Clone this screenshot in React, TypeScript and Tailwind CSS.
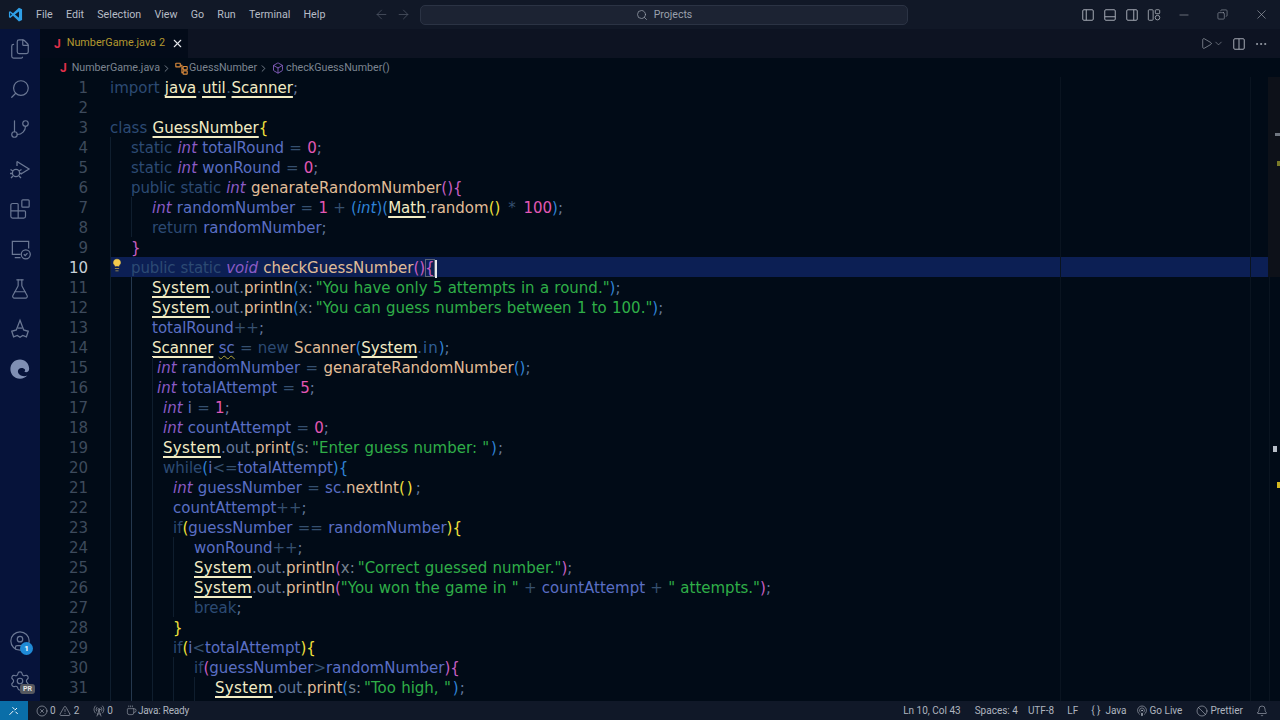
import {
  ArrowLeft,
  ArrowRight,
  Ban,
  Bell,
  Blocks,
  Box,
  ChevronDown,
  ChevronRight,
  CircleUser,
  CircleX,
  Coffee,
  Copy,
  Ellipsis,
  Files,
  FlaskConical,
  GitBranch,
  Lightbulb,
  Minus,
  Play,
  Podcast,
  RadioTower,
  Search,
  Settings,
  TriangleAlert,
  X,
} from "lucide-react";

const TOKEN = {
  k: "text-[#2c4a73]",
  kp: "text-[#2c4a73] tracking-[-0.12px]",
  t: "text-[#f2ecc4] underline decoration-[#f2ecc4] decoration-[length:1.5px] underline-offset-[3px]",
  ts: "text-[#f2ecc4] underline decoration-[#f2ecc4] decoration-[length:1.5px] underline-offset-[3px] tracking-[0.33px]",
  v: "text-[#5a6fc4]",
  d: "text-[#64789c]",
  in: "text-[#2f5f98] tracking-[1px]",
  i: "text-[#8b5bc6] italic",
  ib: "text-[#2f83d6] italic",
  n: "text-[#e257b4]",
  s: "text-[#2fae48]",
  m: "text-[#e0bd98]",
  o: "text-[#35506f]",
  dt: "text-[#35506f] mx-[0.5px]",
  op: "text-[#35506f] mx-[2.5px]",
  y: "text-[#f3e23c]",
  yw: "text-[#f3e23c] tracking-[2px] mr-[1px]",
  pk: "text-[#c95fc4]",
  pb: "text-[#c95fc4] outline outline-1 -outline-offset-1 outline-[#5c6678]",
  b: "text-[#2f83d6]",
  bl: "text-[#2f83d6] ml-[2px] mr-[1px]",
  h: "text-[#74808f] pr-[3px]",
  w: "text-[#5a6fc4] underline decoration-wavy decoration-1 decoration-[#b5a53a] underline-offset-[2px]",
};

type Tok = keyof typeof TOKEN;
type Line = { x: number; c: [Tok, string][] };

const LINES: Line[] = [
  { x: 0, c: [["k", "import "], ["t", "java"], ["dt", "."], ["t", "util"], ["dt", "."], ["t", "Scanner"], ["d", ";"]] },
  { x: 0, c: [] },
  { x: 0, c: [["k", "class "], ["t", "GuessNumber"], ["y", "{"]] },
  { x: 21, c: [["k", "static "], ["i", "int "], ["v", "totalRound "], ["o", "= "], ["n", "0"], ["d", ";"]] },
  { x: 21, c: [["k", "static "], ["i", "int "], ["v", "wonRound "], ["o", "= "], ["n", "0"], ["d", ";"]] },
  { x: 21, c: [["kp", "public static "], ["i", "int "], ["m", "genarateRandomNumber"], ["pk", "()"], ["pk", "{"]] },
  { x: 42, c: [["i", "int "], ["v", "randomNumber "], ["o", "= "], ["n", "1 "], ["o", "+ "], ["b", "("], ["ib", "int"], ["b", ")"], ["b", "("], ["t", "Math"], ["d", "."], ["m", "random"], ["y", "()"], ["op", " * "], ["n", "100"], ["b", ")"], ["d", ";"]] },
  { x: 42, c: [["k", "return "], ["v", "randomNumber"], ["d", ";"]] },
  { x: 21, c: [["pk", "}"]] },
  { x: 21, c: [["kp", "public static "], ["i", "void "], ["m", "checkGuessNumber"], ["pk", "()"], ["pb", "{"]] },
  { x: 42, c: [["ts", "System"], ["d", ".out."], ["m", "println"], ["b", "("], ["h", "x:"], ["s", "\"You have only 5 attempts in a round.\""], ["b", ")"], ["d", ";"]] },
  { x: 42, c: [["ts", "System"], ["d", ".out."], ["m", "println"], ["b", "("], ["h", "x:"], ["s", "\"You can guess numbers between 1 to 100.\""], ["b", ")"], ["d", ";"]] },
  { x: 42, c: [["v", "totalRound"], ["o", "++"], ["d", ";"]] },
  { x: 42, c: [["t", "Scanner"], ["o", " "], ["w", "sc"], ["o", " = "], ["k", "new "], ["m", "Scanner"], ["b", "("], ["t", "System"], ["in", ".in"], ["b", ")"], ["d", ";"]] },
  { x: 47, c: [["i", "int "], ["v", "randomNumber "], ["o", "= "], ["m", "genarateRandomNumber"], ["b", "()"], ["d", ";"]] },
  { x: 47, c: [["i", "int "], ["v", "totalAttempt "], ["o", "= "], ["n", "5"], ["d", ";"]] },
  { x: 53, c: [["i", "int "], ["v", "i "], ["o", "= "], ["n", "1"], ["d", ";"]] },
  { x: 53, c: [["i", "int "], ["v", "countAttempt "], ["o", "= "], ["n", "0"], ["d", ";"]] },
  { x: 53, c: [["ts", "System"], ["d", ".out."], ["m", "print"], ["b", "("], ["h", "s:"], ["s", "\"Enter guess number: \""], ["bl", ")"], ["d", ";"]] },
  { x: 53, c: [["k", "while"], ["b", "("], ["v", "i"], ["o", "<="], ["v", "totalAttempt"], ["b", ")"], ["b", "{"]] },
  { x: 63, c: [["i", "int "], ["v", "guessNumber "], ["o", "= "], ["v", "sc."], ["m", "nextInt"], ["yw", "()"], ["d", ";"]] },
  { x: 63, c: [["v", "countAttempt"], ["o", "++"], ["d", ";"]] },
  { x: 63, c: [["k", "if"], ["y", "("], ["v", "guessNumber "], ["o", "== "], ["v", "randomNumber"], ["y", ")"], ["y", "{"]] },
  { x: 84, c: [["v", "wonRound"], ["o", "++"], ["d", ";"]] },
  { x: 84, c: [["ts", "System"], ["d", ".out."], ["m", "println"], ["pk", "("], ["h", "x:"], ["s", "\"Correct guessed number.\""], ["pk", ")"], ["d", ";"]] },
  { x: 84, c: [["ts", "System"], ["d", ".out."], ["m", "println"], ["pk", "("], ["s", "\"You won the game in \" "], ["o", "+ "], ["v", "countAttempt "], ["o", "+ "], ["s", "\" attempts.\""], ["pk", ")"], ["d", ";"]] },
  { x: 84, c: [["k", "break"], ["d", ";"]] },
  { x: 63, c: [["y", "}"]] },
  { x: 63, c: [["k", "if"], ["y", "("], ["v", "i"], ["o", "<"], ["v", "totalAttempt"], ["y", ")"], ["y", "{"]] },
  { x: 84, c: [["k", "if"], ["pk", "("], ["v", "guessNumber"], ["o", ">"], ["v", "randomNumber"], ["pk", ")"], ["pk", "{"]] },
  { x: 105, c: [["ts", "System"], ["d", ".out."], ["m", "print"], ["b", "("], ["h", "s:"], ["s", "\"Too high, \""], ["bl", ")"], ["d", ";"]] },
];

// indent guides: x inside the editor, first and last line, colour
const GUIDES: [number, number, number, string][] = [
  [70, 4, 32, "#0f1e2e"],
  [91, 7, 8, "#0f1e2e"],
  [91, 11, 32, "#25384e"],
  [112, 15, 32, "#0f1e2e"],
  [133, 24, 27, "#0f1e2e"],
  [133, 30, 32, "#0f1e2e"],
  [154, 31, 32, "#0f1e2e"],
];

const MENU = ["File", "Edit", "Selection", "View", "Go", "Run", "Terminal", "Help"];

function JavaMark({ className }: { className: string }) {
  return <span className={`font-bold text-[#e0304a] text-[12px] leading-none ${className}`}>J</span>;
}

function VsLogo() {
  return (
    <svg viewBox="0 0 24 24" className="w-[15px] h-[15px]">
      <path d="M17.5 1 8 10 3.6 6.6 1.5 7.6v8.8l2.1 1L8 14l9.5 9 5-2.4V3.4z" fill="#2f9fe6" />
      <path d="M17.5 7 11 12l6.5 5z" fill="#0b1424" />
      <path d="M3.5 9.2v5.6L6.3 12z" fill="#0b1424" />
    </svg>
  );
}

function DebugIcon() {
  return (
    <svg viewBox="0 0 24 24" className="w-6 h-6" fill="none" stroke="currentColor" strokeWidth="1.3">
      <path d="M9 4.5 21 12l-8 5" />
      <path d="M9 4.5V9" />
      <circle cx="8" cy="16" r="3.6" />
      <path d="M2.5 12.5 5 14M13.5 12.5 11 14M2 16.5h2.5M11.5 16.5H14M3 21l2-2M13 21l-2-2" />
    </svg>
  );
}

function RemoteIcon() {
  return (
    <svg viewBox="0 0 24 24" className="w-[23px] h-[23px]" fill="none" stroke="currentColor" strokeWidth="1.3">
      <path d="M12 17H3.5V3.5h17V11" />
      <path d="M6 20.5h6" />
      <circle cx="17.5" cy="17" r="4.7" />
      <path d="m15.5 17 1.4 1.4 2.4-2.6" />
    </svg>
  );
}

function PrimeIcon() {
  return (
    <svg viewBox="0 0 24 24" className="w-[22px] h-[22px]" fill="none" stroke="currentColor" strokeWidth="1.4">
      <path d="M12 2.5 16 13l5 1.5-2 6-4-1.5-3 2-3-2-4 1.5-2-6L8 13z" />
      <path d="M9.5 11h5" />
    </svg>
  );
}

function EdgeIcon() {
  return (
    <svg viewBox="0 0 24 24" className="w-[22px] h-[22px]">
      <path
        d="M12 1.5C6 1.5 1.5 6 1.5 12c0 6 4.5 10.5 10.5 10.5 3.4 0 6-1.2 8-3.4-2.4 1.2-6.4 1-8.6-1-2-1.8-2.2-4.6-.6-6.2 1.4-1.4 4.6-1.6 6.2.2.8 1 .8 2-.2 2.9 2.6 1.2 5.2-.2 5.2-3.4C22 6 17.6 1.5 12 1.5z"
        fill="#7f8fb3"
      />
    </svg>
  );
}

function ClassIcon() {
  return (
    <svg viewBox="0 0 16 16" className="w-[13px] h-[13px] shrink-0 text-[#d98a3d] mr-[1px]" fill="none" stroke="currentColor" strokeWidth="1.4">
      <rect x="1" y="1.5" width="5.5" height="4.5" rx="0.5" />
      <rect x="10" y="5.5" width="5" height="4" rx="0.5" />
      <rect x="10" y="11" width="5" height="4" rx="0.5" />
      <path d="M6.5 4H8.500v9H10M8.500 7.500H10" />
    </svg>
  );
}

function ActivityBar() {
  const cls = "h-10 flex items-center justify-center text-[#6b7894]";
  return (
    <div className="w-10 shrink-0 bg-[#06133a] flex flex-col justify-between">
      <div>
        <div className={cls}><Files size={22} strokeWidth={1.3} /></div>
        <div className={cls}><Search size={22} strokeWidth={1.3} className="-scale-x-100" /></div>
        <div className={cls}><GitBranch size={22} strokeWidth={1.3} /></div>
        <div className={cls}><DebugIcon /></div>
        <div className={cls}><Blocks size={22} strokeWidth={1.3} /></div>
        <div className={cls}><RemoteIcon /></div>
        <div className={cls}><FlaskConical size={22} strokeWidth={1.3} /></div>
        <div className={cls}><PrimeIcon /></div>
        <div className={cls}><EdgeIcon /></div>
      </div>
      <div>
        <div className={`${cls} relative`}>
          <CircleUser size={22} strokeWidth={1.3} />
          <span className="absolute left-[20px] top-[21px] w-[13px] h-[13px] rounded-full bg-[#1f8ad6] text-white text-[8px] font-bold leading-[13px] text-center">1</span>
        </div>
        <div className={`${cls} relative`}>
          <Settings size={22} strokeWidth={1.3} />
          <span className="absolute left-[20px] top-[23px] w-[15px] h-[10px] rounded-[3px] bg-[#55585f] text-[#e4e4e4] text-[7px] font-bold leading-[10px] text-center">PR</span>
        </div>
      </div>
    </div>
  );
}

function LayoutIcon({ d }: { d: string }) {
  return (
    <svg viewBox="0 0 24 24" className="w-[14px] h-[14px]" fill="none" stroke="currentColor" strokeWidth="1.7">
      <rect x="3" y="3" width="18" height="18" rx="2" />
      <path d={d} />
    </svg>
  );
}

function TitleBar() {
  return (
    <div className="h-[29px] shrink-0 bg-[#111827] flex items-center text-[#b7bcc6] text-[10.7px]">
      <div className="w-[30px] flex justify-center"><VsLogo /></div>
      <div className="w-[344px] flex gap-[13.2px] pl-[6px] pt-[1px]">
        {MENU.map((m) => (
          <span key={m}>{m}</span>
        ))}
      </div>
      <div className="flex gap-[7px] text-[#4b5261]">
        <ArrowLeft size={15} strokeWidth={1.3} />
        <ArrowRight size={15} strokeWidth={1.3} />
      </div>
      <div className="ml-[9px] w-[488px] h-[20px] bg-[#1c2333] border border-[#2b3344] rounded-[5px] flex items-center justify-center gap-[6px] text-[#9aa0ac] text-[10.5px]">
        <Search size={12} strokeWidth={1.5} />
        Projects
      </div>
      <div className="ml-auto flex items-center text-[#a6abb5]">
        <div className="flex gap-[8px] mr-[16px]">
          <LayoutIcon d="M9 3v18" />
          <LayoutIcon d="M3 15h18" />
          <LayoutIcon d="M15 3v18" />
          <svg viewBox="0 0 16 16" className="w-[14px] h-[14px]" fill="none" stroke="currentColor" strokeWidth="1">
            <rect x="1.5" y="2" width="5.5" height="12" rx="1" />
            <rect x="9.5" y="2" width="5" height="4.5" rx="1" />
            <circle cx="12" cy="11" r="2.6" />
          </svg>
        </div>
        <div className="flex items-center gap-[26px] pr-[11px]">
          <Minus size={14} strokeWidth={1} />
          <Copy size={11} strokeWidth={1.2} className="-scale-x-100" />
          <X size={15} strokeWidth={1} />
        </div>
      </div>
    </div>
  );
}

function Tabs() {
  return (
    <div className="h-[29px] shrink-0 bg-[#0d1322] flex items-stretch">
      <div className="w-[148px] bg-[#030b19] flex items-center pl-[14px] text-[10.8px]">
        <JavaMark className="mr-[6px]" />
        <span className="text-[#b3982f]">NumberGame.java</span>
        <span className="text-[#b3982f] ml-[3px]">2</span>
        <X size={13} strokeWidth={2} className="ml-[6px] shrink-0 text-[#e5e7eb]" />
      </div>
      <div className="ml-auto flex items-center text-[#a6abb5] pr-[12px]">
        <Play size={13} strokeWidth={1.2} />
        <ChevronDown size={11} strokeWidth={1.2} />
        <div className="ml-[8px]"><LayoutIcon d="M12 3v18" /></div>
        <Ellipsis size={14} strokeWidth={1.5} className="ml-[8px]" />
      </div>
    </div>
  );
}

function Breadcrumbs() {
  return (
    <div className="h-[19px] pt-[1px] shrink-0 bg-[#010b17] flex items-center pl-[20px] text-[10.7px] text-[#7c8591]">
      <JavaMark className="mr-[5px]" />
      <span>NumberGame.java</span>
      <ChevronRight size={11} className="ml-[1px] mr-[3px]" />
      <ClassIcon />
      <span>GuessNumber</span>
      <ChevronRight size={11} className="ml-[1px] mr-[3px]" />
      <Box size={12} strokeWidth={1.5} className="text-[#a06fe0] mr-[2px]" />
      <span>checkGuessNumber()</span>
    </div>
  );
}

function Editor() {
  return (
    <div className="flex-1 min-h-0 relative overflow-hidden bg-[#010b17] font-['DejaVu_Sans',sans-serif] text-[15px] [word-spacing:0.5px]">
      {LINES.map((line, idx) => {
        const n = idx + 1;
        const active = n === 10;
        return (
          <div key={n} className="h-5 leading-[22px] flex whitespace-pre">
            <div className={`w-[48px] shrink-0 text-right ${active ? "text-[#c8d0da]" : "text-[#3d4a5c]"}`}>{n}</div>
            <div className={`ml-[22px] flex-1 relative ${active ? "bg-[#0c1f54]" : ""}`} style={{ paddingLeft: line.x }}>
              {active && (
                <Lightbulb size={14} fill="#f2c94c" strokeWidth={1} className="absolute left-[0px] top-[1px] text-[#f2c94c]" />
              )}
              {line.c.map(([tok, text], i) => (
                <span key={i} className={TOKEN[tok]}>{text}</span>
              ))}
              {active && <span className="inline-block w-[2px] h-[18px] bg-[#e5e7eb] align-middle" />}
            </div>
          </div>
        );
      })}
      {GUIDES.map(([x, from, to, color]) => (
        <div
          key={`${x}-${from}`}
          className="absolute w-px"
          style={{ left: x, top: (from - 1) * 20, height: (to - from + 1) * 20, background: color }}
        />
      ))}
      <div className="absolute left-[1020px] top-0 bottom-0 w-px bg-[#0a1420]" />
      <div className="absolute left-[1210px] top-0 bottom-0 w-px bg-[#0a1420]" />
      <div className="absolute left-[1228px] top-0 h-[200px] w-[12px] bg-[#0d1119]" />
      <div className="absolute left-[1229px] top-[200px] bottom-0 w-px bg-[#0a1420]" />
      <div className="absolute right-0 top-[56px] w-[5px] h-[3px] bg-[#6f7680]" />
      <div className="absolute right-0 top-[84px] w-[3px] h-[5px] bg-[#7a7a28]" />
      <div className="absolute right-[3px] top-[369px] w-[4px] h-[6px] bg-[#b8bec8]" />
      <div className="absolute right-0 top-[405px] w-[3px] h-[6px] bg-[#d4b820]" />
    </div>
  );
}

function StatusBar() {
  return (
    <div className="h-[19px] shrink-0 bg-[#101828] flex items-center text-[#aeb4bf] text-[10px]">
      <div className="w-[28px] h-full bg-[#0a6ea8] flex items-center justify-center text-white">
        <svg viewBox="0 0 16 16" className="w-[12px] h-[12px]" fill="none" stroke="currentColor" strokeWidth="1.3">
          <path d="M2 13 7 8M9 7l3-3M6 3l3 3M10 9l3 3" />
        </svg>
      </div>
      <CircleX size={12} strokeWidth={1.2} className="ml-[8px]" />
      <span className="ml-[2px]">0</span>
      <TriangleAlert size={12} strokeWidth={1.2} className="ml-[3px]" />
      <span className="ml-[3px]">2</span>
      <RadioTower size={12} strokeWidth={1.2} className="ml-[14px]" />
      <span className="ml-[2px]">0</span>
      <Coffee size={11} strokeWidth={1.2} className="ml-[13px]" />
      <span className="ml-[1px] tracking-[-0.2px]">Java: Ready</span>
      <div className="ml-auto flex items-center">
        <span>Ln 10, Col 43</span>
        <span className="ml-[14px]">Spaces: 4</span>
        <span className="ml-[10px]">UTF-8</span>
        <span className="ml-[13px]">LF</span>
        <span className="ml-[13px]">{"{ }"}</span>
        <span className="ml-[5px]">Java</span>
        <Podcast size={12} strokeWidth={1.2} className="ml-[9px]" />
        <span className="ml-[2px]">Go Live</span>
        <Ban size={12} strokeWidth={1.2} className="ml-[14px]" />
        <span className="ml-[2px]">Prettier</span>
        <Bell size={12} strokeWidth={1.2} className="ml-[13px] mr-[12px]" />
      </div>
    </div>
  );
}

export default function App() {
  return (
    <div className="w-[1280px] h-[720px] overflow-hidden flex flex-col bg-[#010b17] font-['Roboto',sans-serif]">
      <TitleBar />
      <div className="flex-1 min-h-0 flex">
        <ActivityBar />
        <div className="flex-1 min-w-0 flex flex-col">
          <Tabs />
          <Breadcrumbs />
          <Editor />
        </div>
      </div>
      <StatusBar />
    </div>
  );
}
